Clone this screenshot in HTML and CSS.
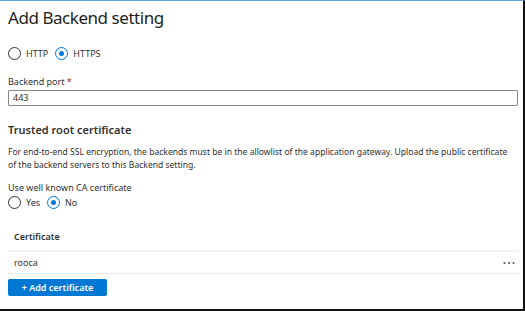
FILE: index.html
```html
<!DOCTYPE html>
<html>
<head>
<meta charset="utf-8">
<link rel="stylesheet" href="styles.css">
</head>
<body>
<div class="frame">
  <div class="panel">
    <h1 class="title">Add Backend setting</h1>
    <div class="radios proto">
      <label class="radio"><span class="circle"></span>HTTP</label>
      <label class="radio"><span class="circle on"></span>HTTPS</label>
    </div>
    <div class="label">Backend port <span class="req">*</span></div>
    <div class="input">443</div>
    <h2 class="section">Trusted root certificate</h2>
    <p class="desc">For end-to-end SSL encryption, the backends must be in the allowlist of the application gateway. Upload the public certificate of the backend servers to this Backend setting.</p>
    <div class="label ca">Use well known CA certificate</div>
    <div class="radios">
      <label class="radio"><span class="circle"></span>Yes</label>
      <label class="radio"><span class="circle on"></span>No</label>
    </div>
    <div class="table">
      <div class="thead">Certificate</div>
      <div class="trow"><span>rooca</span><svg class="more" width="12" height="4" viewBox="0 0 12 4"><circle cx="1.5" cy="2" r="1.1"/><circle cx="6" cy="2" r="1.1"/><circle cx="10.5" cy="2" r="1.1"/></svg></div>
    </div>
    <button class="btn">+ Add certificate</button>
  </div>
</div>
</body>
</html>
```
FILE: styles.css
```css
html, body {
  margin: 0;
  padding: 0;
  background: #ffffff;
}
body {
  width: 525px;
  height: 311px;
  overflow: hidden;
  font-family: "Noto Sans", "Open Sans", sans-serif;
  color: #323130;
}
.frame {
  box-sizing: border-box;
  width: 525px;
  height: 311px;
  border-top: 1px solid #5ba6e6;
  border-right: 2px solid #111111;
  border-bottom: 2px solid #111111;
}
.panel {
  padding: 0 7px 0 8px;
  display: flex;
  flex-direction: column;
}
.title {
  margin: 6px 0 0 0;
  font-size: 17px;
  font-weight: 400;
  letter-spacing: -0.45px;
  line-height: 22px;
  color: #201f1e;
}
.radios {
  display: flex;
  gap: 7px;
  font-size: 9px;
  line-height: 13px;
}
.proto { margin-top: 18px; }
.radio {
  display: flex;
  align-items: center;
  gap: 5px;
  color: #323130;
}
.circle {
  box-sizing: border-box;
  width: 13px;
  height: 13px;
  border: 1px solid #323130;
  border-radius: 50%;
  display: flex;
  align-items: center;
  justify-content: center;
}
.circle.on {
  border-color: #0078d4;
}
.circle.on::after {
  content: "";
  width: 5px;
  height: 5px;
  border-radius: 50%;
  background: #0078d4;
}
.label {
  margin-top: 15px;
  font-size: 9px;
  line-height: 13px;
}
.req { color: #a4262c; }
.input {
  box-sizing: border-box;
  margin-top: 2px;
  width: 510px;
  height: 16px;
  border: 1px solid #8a8886;
  border-radius: 1px;
  padding-left: 4px;
  font-size: 9px;
  line-height: 14px;
}
.section {
  margin: 17px 0 0 0;
  font-size: 11px;
  font-weight: 600;
  line-height: 14px;
  color: #323130;
}
.desc {
  margin: 9px 0 0 0;
  font-size: 8.55px;
  line-height: 13px;
  width: 502px;
}
.ca { margin-top: 9px; }
.radios:not(.proto) { margin-top: 2px; }
.table {
  margin-top: 20px;
  width: 511px;
  font-size: 9px;
}
.thead {
  padding: 0 6px;
  height: 21px;
  line-height: 16px;
  font-weight: 600;
  border-bottom: 2px solid #f3f2f1;
}
.trow {
  display: flex;
  justify-content: space-between;
  align-items: center;
  padding: 0 4px 0 6px;
  height: 21px;
  line-height: 21px;
  border-bottom: 1px solid #edebe9;
}
.more {
  fill: #605e5c;
}
.btn {
  margin-top: 5px;
  width: 99px;
  height: 17px;
  background: #0078d4;
  color: #ffffff;
  border: none;
  border-radius: 2px;
  font-family: inherit;
  font-size: 9px;
  font-weight: 600;
  padding: 0;
  line-height: 17px;
}
```
